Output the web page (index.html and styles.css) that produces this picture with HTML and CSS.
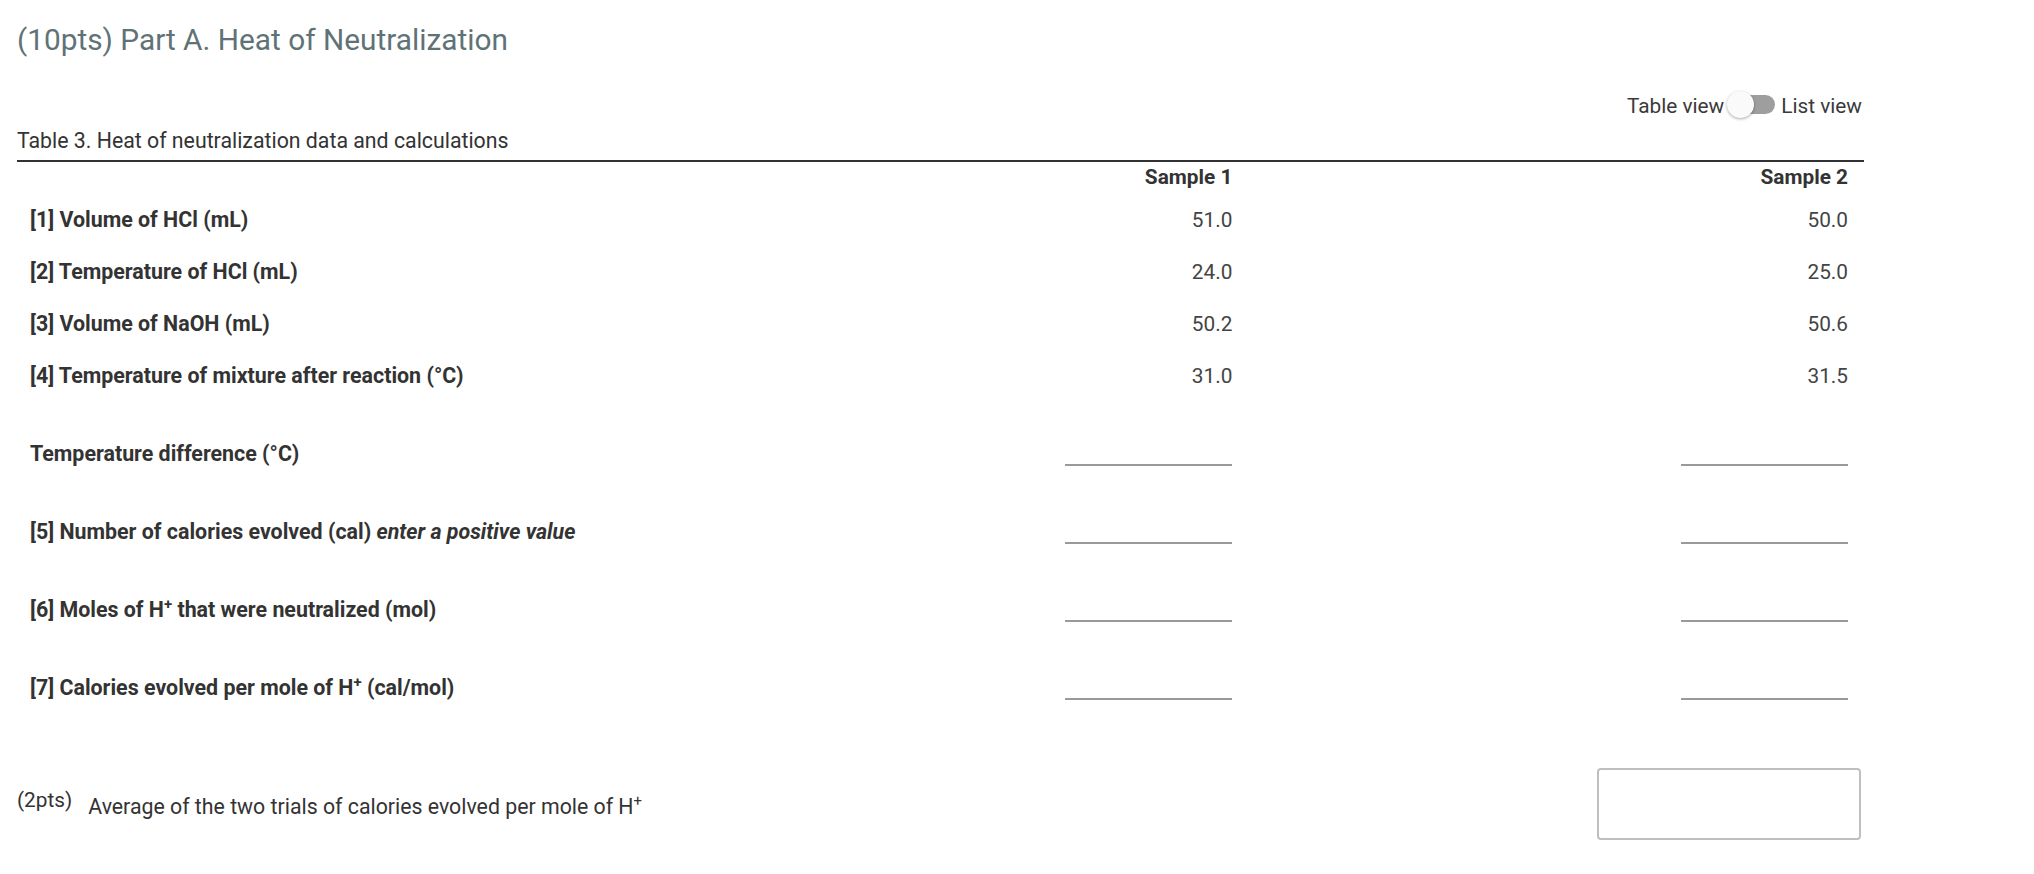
FILE: index.html
```html
<!DOCTYPE html>
<html lang="en">
<head>
<meta charset="utf-8">
<title>Heat of Neutralization</title>
<link rel="stylesheet" href="styles.css">
</head>
<body>
<div class="page">
  <h1 class="title">(10pts) Part A. Heat of Neutralization</h1>
  <div class="toggle-row">
    <span class="toggle-label">Table view</span>
    <span class="switch"><span class="track"></span><span class="knob"></span></span>
    <span class="toggle-label">List view</span>
  </div>
  <div class="caption">Table 3. Heat of neutralization data and calculations</div>
  <div class="table">
    <div class="cell head"></div>
    <div class="cell head num">Sample 1</div>
    <div class="cell head num">Sample 2</div>

    <div class="cell label">[1] Volume of HCl (mL)</div>
    <div class="cell num">51.0</div>
    <div class="cell num">50.0</div>

    <div class="cell label">[2] Temperature of HCl (mL)</div>
    <div class="cell num">24.0</div>
    <div class="cell num">25.0</div>

    <div class="cell label">[3] Volume of NaOH (mL)</div>
    <div class="cell num">50.2</div>
    <div class="cell num">50.6</div>

    <div class="cell label">[4] Temperature of mixture after reaction (°C)</div>
    <div class="cell num">31.0</div>
    <div class="cell num">31.5</div>

    <div class="cell label in-row"><span>Temperature difference (°C)</span></div>
    <div class="cell num in-row"><span class="blank"></span></div>
    <div class="cell num in-row"><span class="blank"></span></div>

    <div class="cell label in-row"><span>[5] Number of calories evolved (cal) <em>enter a positive value</em></span></div>
    <div class="cell num in-row"><span class="blank"></span></div>
    <div class="cell num in-row"><span class="blank"></span></div>

    <div class="cell label in-row"><span>[6] Moles of H<sup>+</sup> that were neutralized (mol)</span></div>
    <div class="cell num in-row"><span class="blank"></span></div>
    <div class="cell num in-row"><span class="blank"></span></div>

    <div class="cell label in-row"><span>[7] Calories evolved per mole of H<sup>+</sup> (cal/mol)</span></div>
    <div class="cell num in-row"><span class="blank"></span></div>
    <div class="cell num in-row"><span class="blank"></span></div>
  </div>
  <div class="avg-row">
    <div class="avg-text"><span class="pts">(2pts)</span><span class="avg-q">Average of the two trials of calories evolved per mole of H<sup>+</sup></span></div>
    <div class="avg-box"></div>
  </div>
</div>
</body>
</html>
```

FILE: styles.css
```css
html, body {
  margin: 0;
  padding: 0;
  background: #ffffff;
}

body {
  font-family: Roboto, "Liberation Sans", sans-serif;
  color: #333333;
}

.page {
  width: 1847px;
  padding-left: 17px;
}

.title {
  margin: 0;
  padding-top: 22px;
  font-size: 29.8px;
  font-weight: 400;
  line-height: 36px;
  color: #5f7377;
}

.toggle-row {
  display: flex;
  justify-content: flex-end;
  align-items: center;
  margin-top: 36px;
  padding-right: 2px;
  height: 24px;
  font-size: 20.8px;
  line-height: 24px;
  color: #3a3a3a;
}

.switch {
  position: relative;
  width: 48px;
  height: 28px;
  margin: -4px 6px 0 3px;
}

.track {
  position: absolute;
  left: 10px;
  top: 5px;
  width: 38px;
  height: 19px;
  border-radius: 10px;
  background: #9e9e9e;
}

.knob {
  position: absolute;
  left: 0;
  top: 1px;
  width: 27px;
  height: 27px;
  border-radius: 50%;
  background: #fafafa;
  box-shadow: 0 1px 3px rgba(0, 0, 0, 0.35);
}

.caption {
  margin-top: 11px;
  font-size: 21.3px;
  line-height: 24px;
  color: #333333;
}

.table {
  margin-top: 7px;
  display: grid;
  grid-template-columns: repeat(3, 1fr);
  border-top: 2px solid #333333;
}

.cell {
  padding: 16px 16px 12px 13px;
  font-size: 20.8px;
  line-height: 24px;
  color: #444444;
}

.cell.head {
  padding-top: 3px;
  padding-bottom: 3px;
  font-weight: 700;
  color: #333333;
}

.num {
  text-align: right;
}

.label {
  font-size: 21.4px;
  font-weight: 700;
  color: #333333;
}

.label sup, .avg-q sup {
  font-size: 0.7em;
  line-height: 0;
}

.in-row {
  height: 78px;
  box-sizing: border-box;
  padding-top: 0;
  padding-bottom: 12px;
  display: flex;
  align-items: flex-end;
}

.num.in-row {
  justify-content: flex-end;
}

.blank {
  display: block;
  width: 167px;
  height: 24px;
  border-bottom: 2px solid #999999;
}

.avg-row {
  display: flex;
  justify-content: space-between;
  align-items: center;
  margin-top: 56px;
  padding-right: 3px;
}

.avg-text {
  display: flex;
  align-items: baseline;
  padding-top: 6px;
  font-size: 21.3px;
  line-height: 24px;
  color: #333333;
}

.pts {
  position: relative;
  top: -7px;
  margin-right: 16px;
  font-size: 20.8px;
}

.avg-box {
  width: 264px;
  height: 72px;
  box-sizing: border-box;
  border: 2px solid #bfbfbf;
  border-radius: 4px;
}
```
